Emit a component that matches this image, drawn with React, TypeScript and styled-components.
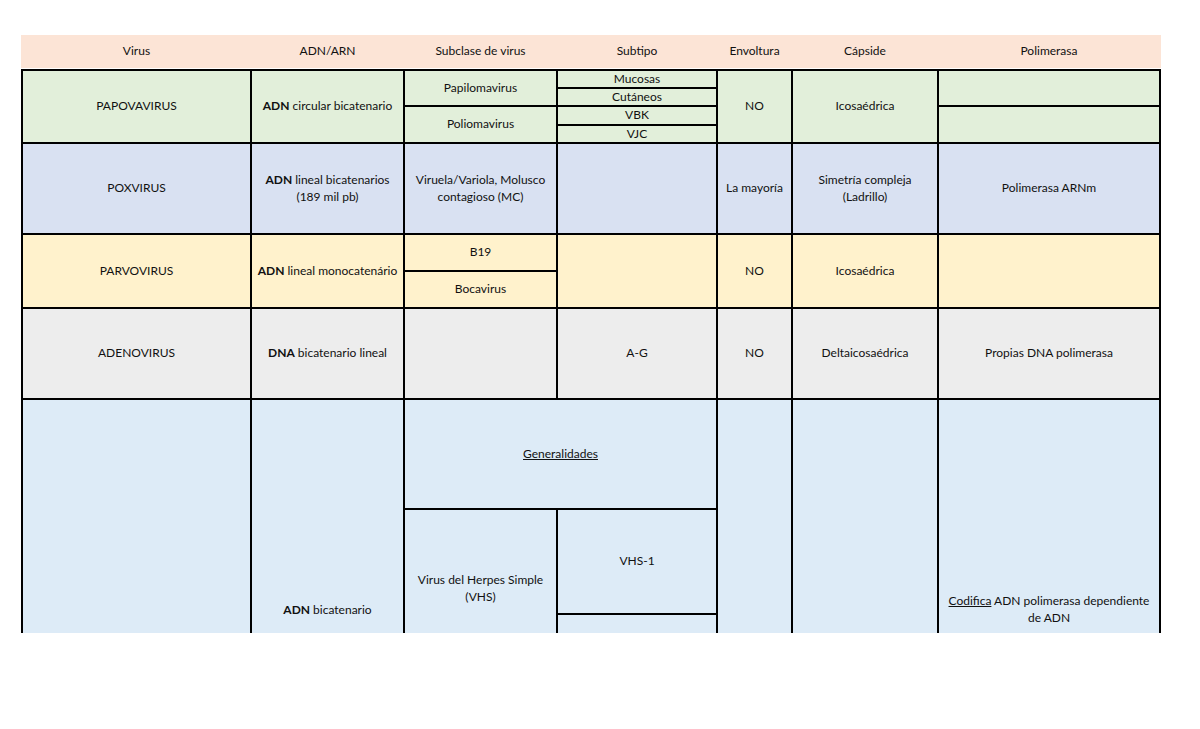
import styled, { createGlobalStyle } from "styled-components";

const GlobalStyle = createGlobalStyle`
  html, body {
    margin: 0;
    padding: 0;
    background: #ffffff;
  }
  body {
    font-family: Lato, "Liberation Sans", Arial, sans-serif;
    color: #111;
  }
`;

const COLS = "227px 151px 151px 158px 73px 144px 220px";

const Page = styled.div`
  padding: 35px 0 0 21px;
  width: 1140px;
`;

const Clip = styled.div`
  height: 598px;
  overflow: hidden;
`;

const HeaderRow = styled.div`
  display: grid;
  grid-template-columns: ${COLS};
  column-gap: 2px;
  padding: 0 2px 2px;
  height: 31px;
  margin-bottom: 1px;
  background: #fce4d6;
`;

const HeaderCell = styled.div`
  display: flex;
  align-items: center;
  justify-content: center;
  font-size: 12px;
`;

const Body = styled.div`
  display: grid;
  grid-template-columns: ${COLS};
  grid-template-rows: 16px 16px 17px 16px 89px 35px 35px 89px 108px 103px 53px 150px;
  gap: 2px;
  padding: 2px 2px 0;
  background: #000;
`;

type Tone = "green" | "lavender" | "yellow" | "grey" | "blue";

const tones: Record<Tone, string> = {
  green: "#e2efda",
  lavender: "#d9e1f2",
  yellow: "#fff2cc",
  grey: "#ededed",
  blue: "#ddebf7",
};

const Cell = styled.div<{ $tone: Tone; $col: string; $row: string }>`
  grid-column: ${({ $col }) => $col};
  grid-row: ${({ $row }) => $row};
  background: ${({ $tone }) => tones[$tone]};
  display: flex;
  align-items: center;
  justify-content: center;
  text-align: center;
  font-size: 12px;
  line-height: 17px;
  padding: 0 4px 2px;
`;

const Under = styled.span`
  text-decoration: underline;
`;

export default function App() {
  return (
    <>
      <GlobalStyle />
      <Page>
        <Clip>
          <HeaderRow>
            <HeaderCell>Virus</HeaderCell>
            <HeaderCell>ADN/ARN</HeaderCell>
            <HeaderCell>Subclase de virus</HeaderCell>
            <HeaderCell>Subtipo</HeaderCell>
            <HeaderCell>Envoltura</HeaderCell>
            <HeaderCell>Cápside</HeaderCell>
            <HeaderCell>Polimerasa</HeaderCell>
          </HeaderRow>
          <Body>
            {/* PAPOVAVIRUS */}
            <Cell $tone="green" $col="1" $row="1 / 5">PAPOVAVIRUS</Cell>
            <Cell $tone="green" $col="2" $row="1 / 5">
              <span>
                <b>ADN</b> circular bicatenario
              </span>
            </Cell>
            <Cell $tone="green" $col="3" $row="1 / 3">Papilomavirus</Cell>
            <Cell $tone="green" $col="3" $row="3 / 5">Poliomavirus</Cell>
            <Cell $tone="green" $col="4" $row="1">Mucosas</Cell>
            <Cell $tone="green" $col="4" $row="2">Cutáneos</Cell>
            <Cell $tone="green" $col="4" $row="3">VBK</Cell>
            <Cell $tone="green" $col="4" $row="4">VJC</Cell>
            <Cell $tone="green" $col="5" $row="1 / 5">NO</Cell>
            <Cell $tone="green" $col="6" $row="1 / 5">Icosaédrica</Cell>
            <Cell $tone="green" $col="7" $row="1 / 3" />
            <Cell $tone="green" $col="7" $row="3 / 5" />

            {/* POXVIRUS */}
            <Cell $tone="lavender" $col="1" $row="5">POXVIRUS</Cell>
            <Cell $tone="lavender" $col="2" $row="5">
              <span>
                <b>ADN</b> lineal bicatenarios
                <br />
                (189 mil pb)
              </span>
            </Cell>
            <Cell $tone="lavender" $col="3" $row="5">
              <span>
                Viruela/Variola, Molusco
                <br />
                contagioso (MC)
              </span>
            </Cell>
            <Cell $tone="lavender" $col="4" $row="5" />
            <Cell $tone="lavender" $col="5" $row="5">La mayoría</Cell>
            <Cell $tone="lavender" $col="6" $row="5">
              <span>
                Simetría compleja
                <br />
                (Ladrillo)
              </span>
            </Cell>
            <Cell $tone="lavender" $col="7" $row="5">Polimerasa ARNm</Cell>

            {/* PARVOVIRUS */}
            <Cell $tone="yellow" $col="1" $row="6 / 8">PARVOVIRUS</Cell>
            <Cell $tone="yellow" $col="2" $row="6 / 8">
              <span>
                <b>ADN</b> lineal monocatenário
              </span>
            </Cell>
            <Cell $tone="yellow" $col="3" $row="6">B19</Cell>
            <Cell $tone="yellow" $col="3" $row="7">Bocavirus</Cell>
            <Cell $tone="yellow" $col="4" $row="6 / 8" />
            <Cell $tone="yellow" $col="5" $row="6 / 8">NO</Cell>
            <Cell $tone="yellow" $col="6" $row="6 / 8">Icosaédrica</Cell>
            <Cell $tone="yellow" $col="7" $row="6 / 8" />

            {/* ADENOVIRUS */}
            <Cell $tone="grey" $col="1" $row="8">ADENOVIRUS</Cell>
            <Cell $tone="grey" $col="2" $row="8">
              <span>
                <b>DNA</b> bicatenario lineal
              </span>
            </Cell>
            <Cell $tone="grey" $col="3" $row="8" />
            <Cell $tone="grey" $col="4" $row="8">A-G</Cell>
            <Cell $tone="grey" $col="5" $row="8">NO</Cell>
            <Cell $tone="grey" $col="6" $row="8">Deltaicosaédrica</Cell>
            <Cell $tone="grey" $col="7" $row="8">Propias DNA polimerasa</Cell>

            {/* HERPESVIRUS */}
            <Cell $tone="blue" $col="1" $row="9 / 13" />
            <Cell $tone="blue" $col="2" $row="9 / 13">
              <span>
                <b>ADN</b> bicatenario
              </span>
            </Cell>
            <Cell $tone="blue" $col="3 / 5" $row="9">
              <Under>Generalidades</Under>
            </Cell>
            <Cell $tone="blue" $col="3" $row="10 / 12">
              <span>
                Virus del Herpes Simple
                <br />
                (VHS)
              </span>
            </Cell>
            <Cell $tone="blue" $col="4" $row="10">VHS-1</Cell>
            <Cell $tone="blue" $col="4" $row="11" />
            <Cell $tone="blue" $col="3 / 5" $row="12" />
            <Cell $tone="blue" $col="5" $row="9 / 13" />
            <Cell $tone="blue" $col="6" $row="9 / 13" />
            <Cell $tone="blue" $col="7" $row="9 / 13">
              <span>
                <Under>Codifica</Under> ADN polimerasa dependiente
                <br />
                de ADN
              </span>
            </Cell>
          </Body>
        </Clip>
      </Page>
    </>
  );
}
